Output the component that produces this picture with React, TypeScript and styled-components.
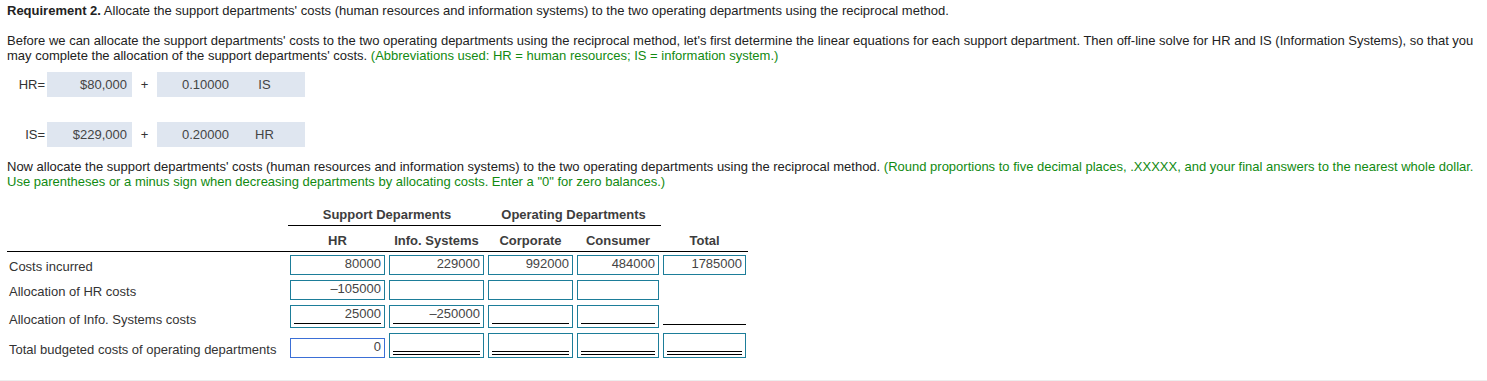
import styled, {createGlobalStyle} from 'styled-components';

const GlobalStyle = createGlobalStyle`
    body {
        margin: 0;
        background: #fff;
        font-family: 'Liberation Sans', Arial, sans-serif;
        font-size: 13px;
        color: #222;
    }
`;

type Line = 'none' | 'single' | 'double';

interface CellValue {
    value: string;
    line?: Line;
    focus?: boolean;
}

interface RowData {
    label: string;
    cells: (CellValue | null)[];
    total: CellValue | 'rule' | null;
}

const rows: RowData[] = [
    {
        label: 'Costs incurred',
        cells: [{value: '80000'}, {value: '229000'}, {value: '992000'}, {value: '484000'}],
        total: {value: '1785000'},
    },
    {
        label: 'Allocation of HR costs',
        cells: [{value: '–105000'}, {value: ''}, {value: ''}, {value: ''}],
        total: null,
    },
    {
        label: 'Allocation of Info. Systems costs',
        cells: [
            {value: '25000', line: 'single'},
            {value: '–250000', line: 'single'},
            {value: '', line: 'single'},
            {value: '', line: 'single'},
        ],
        total: 'rule',
    },
    {
        label: 'Total budgeted costs of operating departments',
        cells: [
            {value: '0', focus: true},
            {value: '', line: 'double'},
            {value: '', line: 'double'},
            {value: '', line: 'double'},
        ],
        total: {value: '', line: 'double'},
    },
];

const columns = [
    {title: 'HR', width: 99},
    {title: 'Info. Systems', width: 99},
    {title: 'Corporate', width: 89},
    {title: 'Consumer', width: 86},
];

const NumberBox = ({cell}: {cell: CellValue}) => (
    <Box $focus={!!cell.focus}>
        <BoxInner $line={cell.line ?? 'none'}>{cell.value}</BoxInner>
    </Box>
);

const App = () => {
    return (
        <>
            <GlobalStyle />
            <Page>
                <Heading>
                    <b>Requirement 2.</b> Allocate the support departments' costs (human resources and
                    information systems) to the two operating departments using the reciprocal method.
                </Heading>

                <Para $top={15}>
                    Before we can allocate the support departments' costs to the two operating departments
                    using the reciprocal method, let's first determine the linear equations for each support
                    department. Then off-line solve for HR and IS (Information Systems), so that you may
                    complete the allocation of the support departments' costs.{' '}
                    <Hint>(Abbreviations used: HR = human resources; IS = information system.)</Hint>
                </Para>

                <EqRow $top={9}>
                    <EqLabel>HR=</EqLabel>
                    <Shaded $width={85}>$80,000</Shaded>
                    <Plus>+</Plus>
                    <Shaded $width={148}>
                        <Coef>0.10000</Coef>
                        <Unit>IS</Unit>
                    </Shaded>
                </EqRow>

                <EqRow $top={25}>
                    <EqLabel>IS=</EqLabel>
                    <Shaded $width={85}>$229,000</Shaded>
                    <Plus>+</Plus>
                    <Shaded $width={148}>
                        <Coef>0.20000</Coef>
                        <Unit>HR</Unit>
                    </Shaded>
                </EqRow>

                <Para $top={12}>
                    Now allocate the support departments' costs (human resources and information systems) to
                    the two operating departments using the reciprocal method.{' '}
                    <Hint>
                        (Round proportions to five decimal places, .XXXXX, and your final answers to the nearest
                        whole dollar. Use parentheses or a minus sign when decreasing departments by allocating
                        costs. Enter a "0" for zero balances.)
                    </Hint>
                </Para>

                <Allocation>
                    <colgroup>
                        <col style={{width: 281}} />
                        {columns.map((c) => (
                            <col key={c.title} style={{width: c.width}} />
                        ))}
                        <col style={{width: 87}} />
                    </colgroup>
                    <thead>
                        <tr>
                            <GroupTh />
                            <GroupTh colSpan={2} $rule>
                                Support Deparments
                            </GroupTh>
                            <GroupTh colSpan={2} $rule>
                                Operating Departments
                            </GroupTh>
                            <GroupTh />
                        </tr>
                        <tr>
                            <ColTh />
                            {columns.map((c) => (
                                <ColTh key={c.title}>{c.title}</ColTh>
                            ))}
                            <ColTh>Total</ColTh>
                        </tr>
                    </thead>
                    <tbody>
                        {rows.map((row) => (
                            <tr key={row.label}>
                                <LabelTd>{row.label}</LabelTd>
                                {row.cells.map((cell, i) => (
                                    <NumTd key={i}>{cell && <NumberBox cell={cell} />}</NumTd>
                                ))}
                                <NumTd>
                                    {row.total === 'rule' && <TotalRule />}
                                    {row.total && row.total !== 'rule' && <NumberBox cell={row.total} />}
                                </NumTd>
                            </tr>
                        ))}
                    </tbody>
                </Allocation>
            </Page>
        </>
    );
};

export default App;

const Page = styled.div`
    box-sizing: border-box;
    height: 381px;
    padding: 3px 7px 0;
    border-bottom: 1px solid #ededed;
    overflow: hidden;
`;

const Heading = styled.div`
    line-height: 15px;

    b {
        font-weight: bold;
    }
`;

const Para = styled.div<{$top: number}>`
    margin-top: ${(p) => p.$top}px;
    line-height: 15px;
`;

const Hint = styled.span`
    color: #118a11;
`;

const EqRow = styled.div<{$top: number}>`
    display: flex;
    align-items: center;
    height: 25px;
    margin-top: ${(p) => p.$top}px;
    line-height: 25px;
    color: #333;
`;

const EqLabel = styled.div`
    width: 38px;
    margin-right: 2px;
    text-align: right;
`;

const Shaded = styled.div<{$width: number}>`
    display: flex;
    justify-content: flex-end;
    box-sizing: border-box;
    width: ${(p) => p.$width}px;
    height: 25px;
    padding-right: 5px;
    background: #dfe6f0;
    color: #444;
`;

const Plus = styled.div`
    width: 25px;
    text-align: center;
`;

const Coef = styled.div`
    width: 72px;
    text-align: right;
`;

const Unit = styled.div`
    flex: 1;
    text-align: center;
`;

const Allocation = styled.table`
    margin-top: 18px;
    border-collapse: collapse;
    border-spacing: 0;
    table-layout: fixed;
    width: 741px;
    color: #333;
`;

const GroupTh = styled.th<{$rule?: boolean}>`
    padding: 0 0 3px;
    line-height: 15px;
    font-weight: bold;
    text-align: center;
    color: #3d3d3d;
    border-bottom: ${(p) => (p.$rule ? '1px solid #000' : 'none')};
`;

const ColTh = styled.th`
    padding: 7px 0 3px;
    line-height: 15px;
    font-weight: bold;
    text-align: center;
    color: #3d3d3d;
    border-bottom: 1px solid #000;
`;

const LabelTd = styled.td`
    padding: 3px 2px 0;
    vertical-align: bottom;
    line-height: 20px;
    color: #333;
    white-space: nowrap;
`;

const NumTd = styled.td`
    padding: 3px 2px 2px;
    vertical-align: bottom;
`;

const Box = styled.div<{$focus: boolean}>`
    border: 1px solid ${(p) => (p.$focus ? '#3b6fd6' : '#1d7d99')};
    background: #fff;
`;

const BoxInner = styled.div<{$line: Line}>`
    height: ${(p) => (p.$line === 'none' ? '18px' : '17px')};
    margin: 0 3px;
    line-height: 16px;
    text-align: right;
    color: #444;
    border-bottom: ${(p) =>
        p.$line === 'single' ? '1px solid #000' : p.$line === 'double' ? '4px double #000' : 'none'};
    margin-bottom: ${(p) => (p.$line === 'single' ? '3px' : p.$line === 'double' ? '2px' : '0')};
`;

const TotalRule = styled.div`
    margin-bottom: 3px;
    border-bottom: 1px solid #000;
`;
